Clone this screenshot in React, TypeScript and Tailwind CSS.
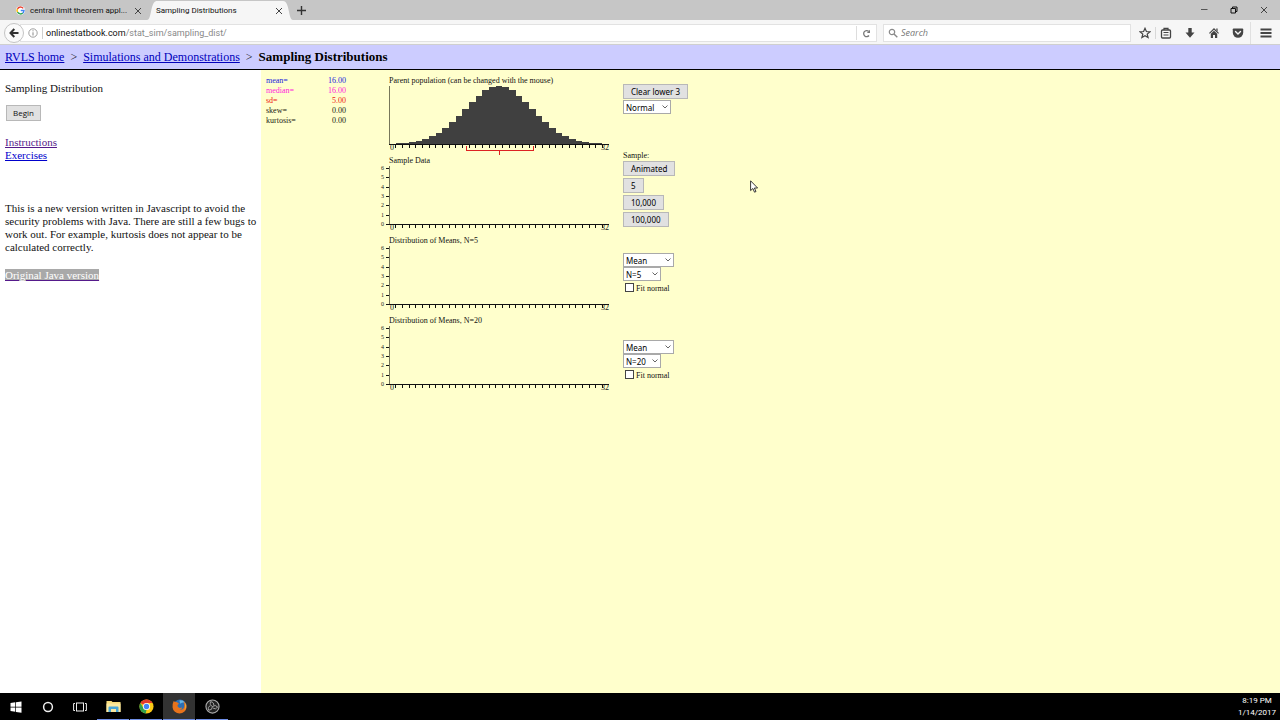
import { useState } from 'react';
import type { ReactNode } from 'react';

const UI_FONT = 'font-["Roboto",sans-serif]';
const SERIF = 'font-["Liberation_Serif",serif]';

const stats = [
  { label: 'mean=', value: '16.00', color: 'text-[#2222dd]' },
  { label: 'median=', value: '16.00', color: 'text-[#ff22dd]' },
  { label: 'sd=', value: '5.00', color: 'text-[#ee2211]' },
  { label: 'skew=', value: '0.00', color: 'text-[#222211]' },
  { label: 'kurtosis=', value: '0.00', color: 'text-[#222211]' },
];

const BINS = 33;
const BIN_WIDTH = 220 / BINS;
const AXIS_X = 11;
const AXIS_Y = 70;

// normal curve with mean 16 and sd 5
const normalBins = Array.from({ length: BINS }, (_, i) => Math.round(58 * Math.exp(-((i - 16) ** 2) / 50)));

function Chart({ title, bins, yAxis }: { title: string; bins?: number[]; yAxis?: boolean }) {
  return (
    <svg width="234" height="80" viewBox="0 0 234 80" className="block overflow-visible" role="img" aria-label={title}>
      <text x={AXIS_X} y="9" fontSize="8" fill="#111">{title}</text>
      {bins?.map((h, i) => (
        <rect
          key={i}
          x={AXIS_X + i * BIN_WIDTH}
          y={AXIS_Y - h}
          width={BIN_WIDTH}
          height={h}
          fill="#404040"
          shapeRendering="crispEdges"
        />
      ))}
      <g stroke="#111" strokeWidth="1" shapeRendering="crispEdges">
        <line x1={AXIS_X} x2={AXIS_X} y1="12" y2={AXIS_Y} stroke="#77775a" />
        <line x1={yAxis ? 8 : AXIS_X} x2="231" y1={AXIS_Y + 0.5} y2={AXIS_Y + 0.5} />
        {Array.from({ length: BINS - 1 }, (_, i) => (
          <line key={i} x1={AXIS_X + (i + 1) * BIN_WIDTH} x2={AXIS_X + (i + 1) * BIN_WIDTH} y1={AXIS_Y} y2={AXIS_Y + 4} />
        ))}
        {yAxis && [1, 2, 3, 4, 5, 6].map(n => (
          <line key={n} x1="8" x2="11" y1={AXIS_Y - n * 9.33 + 0.5} y2={AXIS_Y - n * 9.33 + 0.5} />
        ))}
      </g>
      {yAxis && [0, 1, 2, 3, 4, 5, 6].map(n => (
        <text key={n} x="6" y={AXIS_Y + 2 - n * 9.33} fontSize="6" textAnchor="end" fill="#222">{n}</text>
      ))}
      <text x="12" y="76" fontSize="8" fill="#222">0</text>
      <text x="231" y="76" fontSize="8" textAnchor="end" fill="#222">32</text>
      {bins && (
        <path d="M88.5 72V76.5H155.5V72M121.5 76.5V81" fill="none" stroke="#dd2222" strokeWidth="1" shapeRendering="crispEdges" />
      )}
    </svg>
  );
}

function SimButton({ children }: { children: ReactNode }) {
  return (
    <button className="h-[15px] border border-[#b8b8b8] bg-[#e1e1e1] px-[7px] font-['Noto_Sans',sans-serif] text-[8px] leading-[14px] text-black">
      {children}
    </button>
  );
}

function Select({ label, options, width }: { label: string; options: string[]; width: string }) {
  return (
    <div className={`relative h-[14px] ${width}`}>
      <select
        aria-label={label}
        className="block h-full w-full appearance-none border border-[#a9a9a9] bg-white px-[2px] pt-px font-['Noto_Sans',sans-serif] text-[8px] leading-3 text-black"
      >
        {options.map(o => <option key={o}>{o}</option>)}
      </select>
      <svg className="pointer-events-none absolute right-[3px] top-[5px]" width="6" height="4" viewBox="0 0 6 4">
        <path d="M0.5 0.5L3 3L5.5 0.5" fill="none" stroke="#555" strokeWidth="0.9" />
      </svg>
    </div>
  );
}

function DistributionControls({ size, className }: { size: string; className: string }) {
  const [fit, setFit] = useState(false);

  return (
    <div className={className}>
      <Select label="Statistic" options={['Mean', 'Median', 'sd', 'Variance', 'Range']} width="w-[51px]" />
      <Select
        label="Sample size"
        options={[size, ...['N=2', 'N=5', 'N=10', 'N=16', 'N=20', 'N=25'].filter(n => n !== size)]}
        width="w-[38px]"
      />
      <label className="ml-[2px] flex h-3 items-center gap-[2px] text-[8px] leading-3">
        <input
          type="checkbox"
          checked={fit}
          onChange={e => setFit(e.target.checked)}
          className="size-[9px] appearance-none border border-[#444] bg-white checked:bg-[#444]"
        />
        <span className="pt-1">Fit normal</span>
      </label>
    </div>
  );
}

function CloseIcon({ className }: { className?: string }) {
  return (
    <svg width="8" height="8" viewBox="0 0 8 8" className={className}>
      <path d="M1 1L7 7M7 1L1 7" stroke="#444" strokeWidth="1" fill="none" />
    </svg>
  );
}

function TabBar() {
  return (
    <div className="flex h-5 items-end bg-[#c6c6c6] text-[8px] leading-[18px] text-[#111]">
      <div className="flex h-[19px] w-[147px] items-center pl-4">
        <svg width="9" height="9" viewBox="0 0 18 18" className="mr-[5px] shrink-0 rounded-full bg-white">
          <path d="M14.5 4.8A7 7 0 0 0 3 5.6" fill="none" stroke="#ea4335" strokeWidth="3" />
          <path d="M3 5.6A7 7 0 0 0 3 12.4" fill="none" stroke="#fbbc05" strokeWidth="3" />
          <path d="M3 12.4A7 7 0 0 0 13.5 14.2" fill="none" stroke="#34a853" strokeWidth="3" />
          <path d="M13.5 14.2A7 7 0 0 0 16 9H9.5" fill="none" stroke="#4285f4" strokeWidth="3" />
        </svg>
        <span className="w-[104px] whitespace-nowrap">central limit theorem appl...</span>
        <button aria-label="Close tab"><CloseIcon /></button>
      </div>
      <div className="flex h-[19px] items-stretch">
        <svg width="10" height="19" viewBox="0 0 10 19">
          <path d="M0 19C5 19 3 0 10 0V19Z" fill="#f6f6f6" />
        </svg>
        <div className="-ml-px flex w-[127px] items-center justify-between bg-[#f6f6f6]">
          <span>Sampling Distributions</span>
          <button aria-label="Close tab"><CloseIcon /></button>
        </div>
        <svg width="10" height="19" viewBox="0 0 10 19">
          <path d="M10 19C5 19 7 0 0 0V19Z" fill="#f6f6f6" />
        </svg>
      </div>
      <button aria-label="New tab" className="ml-1 flex h-[19px] items-center">
        <svg width="9" height="9" viewBox="0 0 9 9"><path d="M4.5 0V9M0 4.5H9" stroke="#333" strokeWidth="1.4" /></svg>
      </button>
      <div className="ml-auto flex h-5 items-center gap-[22px] pr-3">
        <button aria-label="Minimize">
          <svg width="8" height="8" viewBox="0 0 8 8"><path d="M1 3.5H7.5" stroke="#555" /></svg>
        </button>
        <button aria-label="Restore">
          <svg width="8" height="8" viewBox="0 0 8 8" fill="none" stroke="#111">
            <path d="M1 2.5H5.5V7H1Z" />
            <path d="M2.5 2V1H7V5.5H6" />
          </svg>
        </button>
        <button aria-label="Close"><CloseIcon /></button>
      </div>
    </div>
  );
}

function Toolbar() {
  return (
    <div className="flex h-[25px] items-center border-b border-[#cfcfcf] bg-[#f6f6f6] pt-[2px] text-[9px]">
      <button aria-label="Back" className="z-10 ml-1 flex size-5 shrink-0 items-center justify-center rounded-full border border-[#c4c4c4] bg-[#fbfbfb]">
        <svg width="10" height="10" viewBox="0 0 10 10">
          <path d="M5.3 1L1.5 5L5.3 9M1.8 5H9.5" fill="none" stroke="#333" strokeWidth="2" />
        </svg>
      </button>
      <div className="-ml-1 flex h-[18px] flex-1 items-center border border-[#e2e2e2] bg-white pl-[7px]">
        <svg width="10" height="10" viewBox="0 0 10 10" className="mr-1 shrink-0">
          <circle cx="5" cy="5" r="4.2" fill="none" stroke="#888" strokeWidth="0.8" />
          <path d="M5 4.3V7.5M5 2.3V3.3" stroke="#888" />
        </svg>
        <div className="h-3 w-px bg-[#d0d0d0]" />
        <a href="#" className="flex-1 pl-[3px] pt-[2px] text-[#888]">
          <span className="text-[#111]">onlinestatbook.com</span>/stat_sim/sampling_dist/
        </a>
        <button aria-label="Reload" className="flex h-[14px] w-5 items-center justify-center border-l border-[#ddd]">
          <svg width="9" height="9" viewBox="0 0 9 9">
            <path d="M7 6.5A3 3 0 1 1 6.6 2.3" fill="none" stroke="#777" strokeWidth="1.3" />
            <path d="M8 0.8V4H4.8Z" fill="#777" />
          </svg>
        </button>
      </div>
      <div className="ml-[6px] flex h-[18px] w-[248px] items-center border border-[#e2e2e2] bg-white pl-1">
        <svg width="10" height="10" viewBox="0 0 10 10" className="mr-[3px] shrink-0">
          <circle cx="4" cy="4" r="2.7" fill="none" stroke="#888" strokeWidth="1.2" />
          <path d="M6 6L9.3 9.3" stroke="#888" strokeWidth="1.4" />
        </svg>
        <input
          aria-label="Search"
          placeholder="Search"
          className="w-full bg-transparent font-['Open_Sans',sans-serif] italic outline-none placeholder:text-[#777]"
        />
      </div>
      <div className="flex h-full items-center pl-2">
        <button aria-label="Bookmark" className="mr-1">
          <svg width="12" height="12" viewBox="0 0 12 12">
            <path d="M6 1.3L7.4 4.5L10.9 4.8L8.2 7.1L9.1 10.5L6 8.7L2.9 10.5L3.8 7.1L1.1 4.8L4.6 4.5Z" fill="none" stroke="#444" strokeWidth="1.2" />
          </svg>
        </button>
        <div className="h-3 w-px bg-[#d8d8d8]" />
        <button aria-label="Bookmarks list" className="ml-1 mr-3">
          <svg width="12" height="12" viewBox="0 0 12 12" fill="none" stroke="#444">
            <rect x="1.5" y="3" width="9" height="8" rx="1" strokeWidth="1.3" />
            <path d="M4 3V1.3H8V3" strokeWidth="1.2" />
            <path d="M3.5 5.5H8.5M3.5 8H8.5" strokeWidth="1.1" />
          </svg>
        </button>
        <button aria-label="Downloads" className="mr-3">
          <svg width="12" height="12" viewBox="0 0 12 12"><path d="M4.3 1H7.7V5.5H10.5L6 10.8L1.5 5.5H4.3Z" fill="#444" /></svg>
        </button>
        <button aria-label="Home" className="mr-3">
          <svg width="12" height="12" viewBox="0 0 12 12">
            <path d="M6 1L11 6L10.2 6.8L6 2.8L1.8 6.8L1 6Z" fill="#444" />
            <path d="M2.8 6.8L6 3.8L9.2 6.8V11H7V8H5V11H2.8Z" fill="#444" />
            <path d="M8.3 1.5H9.6V4.5L8.3 3.2Z" fill="#444" />
          </svg>
        </button>
        <button aria-label="Pocket" className="mr-[6px]">
          <svg width="12" height="12" viewBox="0 0 12 12">
            <path d="M1.6 1.5H10.4Q11.2 1.5 11.2 2.3V5.5A5.2 5.2 0 0 1 0.8 5.5V2.3Q0.8 1.5 1.6 1.5Z" fill="#444" />
            <path d="M3.5 4.5L6 7L8.5 4.5" fill="none" stroke="#f6f6f6" strokeWidth="1.4" strokeLinecap="round" />
          </svg>
        </button>
        <div className="h-full w-px bg-[#e0e0e0]" />
        <button aria-label="Menu" className="ml-[9px] mr-2">
          <svg width="12" height="10" viewBox="0 0 12 10">
            <path d="M0.5 1.5H11.5M0.5 5H11.5M0.5 8.5H11.5" stroke="#444" strokeWidth="1.8" />
          </svg>
        </button>
      </div>
    </div>
  );
}

function TaskButton({ label, open, active, children }: { label: string; open?: boolean; active?: boolean; children: ReactNode }) {
  return (
    <button
      aria-label={label}
      className={`flex h-full w-8 items-center justify-center ${active ? 'bg-[#333]' : ''} ${open ? 'border-b border-[#7090e8]' : ''}`}
    >
      {children}
    </button>
  );
}

function Taskbar() {
  return (
    <footer className="flex h-[27px] items-stretch bg-black text-white">
      <div className="flex">
        <TaskButton label="Start">
          <svg width="12" height="12" viewBox="0 0 12 12" fill="#fff">
            <path d="M0.5 2L5.3 1.3V5.7H0.5ZM6 1.2L11.5 0.4V5.7H6ZM0.5 6.4H5.3V10.8L0.5 10.1ZM6 6.4H11.5V11.7L6 10.9Z" />
          </svg>
        </TaskButton>
        <TaskButton label="Cortana">
          <svg width="12" height="12" viewBox="0 0 12 12"><circle cx="6" cy="6" r="4.4" fill="none" stroke="#eee" strokeWidth="1.5" /></svg>
        </TaskButton>
        <TaskButton label="Task view">
          <svg width="14" height="10" viewBox="0 0 14 10" fill="none" stroke="#eee">
            <rect x="3.5" y="1" width="7" height="8" />
            <path d="M2 1.5H0.6V8.5H2M12 1.5H13.4V8.5H12" />
          </svg>
        </TaskButton>
      </div>
      <div className="ml-px flex gap-px">
        <TaskButton label="File Explorer" open>
          <svg width="15" height="13" viewBox="0 0 15 13">
            <path d="M0.5 1H5.5L6.5 2H14.5V12H0.5Z" fill="#f7dc7c" />
            <path d="M0.5 3.5H14.5V12H0.5Z" fill="#fbe9a0" />
            <path d="M2.5 12V7.5Q2.5 6.5 3.5 6.5H11.5Q12.5 6.5 12.5 7.5V12H10V9H5V12Z" fill="#48a6d8" />
          </svg>
        </TaskButton>
        <TaskButton label="Chrome" open>
          <svg width="15" height="15" viewBox="0 0 16 16">
            <circle cx="8" cy="8" r="7.5" fill="#fbc916" />
            <path d="M8 8L1.5 4.25A7.5 7.5 0 0 1 14.5 4.25H8Z" fill="#e33b2e" />
            <path d="M1.5 4.25L4.8 9.9L8 11.5L7.2 15.46A7.5 7.5 0 0 1 1.5 4.25Z" fill="#30a04c" />
            <circle cx="8" cy="8" r="3.8" fill="#fff" />
            <circle cx="8" cy="8" r="2.9" fill="#4285f4" />
          </svg>
        </TaskButton>
        <TaskButton label="Firefox" open active>
          <svg width="15" height="15" viewBox="0 0 16 16">
            <circle cx="8.5" cy="7.5" r="7" fill="#2c6fb5" />
            <path d="M8 1.5Q12 1 14 4Q11 3 9 5Q8 3 8 1.5Z" fill="#67b7e6" />
            <path d="M1.8 2.2Q3 3.5 5 3.2L7.5 5Q5.2 6 6 8Q7.5 10.5 11 8.8Q10.5 11.2 8 11.5Q13.5 12 13.2 6.5Q13 4 12 2.5Q16 5 15.5 9A7.5 7.3 0 0 1 0.6 9Q0.3 5 1.8 2.2Z" fill="#e8731c" />
            <path d="M13.8 4Q16 8.5 13.2 12Q14.7 8 13.8 4Z" fill="#fbc93d" />
          </svg>
        </TaskButton>
        <TaskButton label="OBS" open>
          <svg width="15" height="15" viewBox="0 0 16 16" fill="none" stroke="#aaa">
            <circle cx="8" cy="8" r="7" fill="#222" strokeWidth="1.2" />
            <path d="M8 8Q4.5 6.5 6 2.8M8 8Q11 5.5 13.5 8.6M8 8Q7.8 12 4 12M6 2.8Q9.8 3.5 9.3 6.8M13.5 8.6Q11.2 11.8 8.6 9.7M4 12Q2.5 8.3 5.8 7.2" strokeWidth="1" />
          </svg>
        </TaskButton>
      </div>
      <div className="ml-auto flex flex-col items-center justify-center pr-1 text-[8px] leading-3">
        <span>8:19 PM</span>
        <span>1/14/2017</span>
      </div>
    </footer>
  );
}

function Sidebar() {
  return (
    <aside className="w-[261px] shrink-0 bg-white pl-[5px] pt-3 text-[11px] leading-[13px] text-[#111]">
      <p>Sampling Distribution</p>
      <button className="ml-px mt-[10px] block h-4 border border-[#b8b8b8] bg-[#e1e1e1] px-[6px] font-['Open_Sans',sans-serif] text-[8px] leading-[14px]">
        Begin
      </button>
      <nav className="mt-[15px] flex flex-col items-start">
        <a href="#" className="text-[#551a8b] underline">Instructions</a>
        <a href="#" className="text-[#0000cc] underline">Exercises</a>
      </nav>
      <p className="mt-10">
        This is a new version written in Javascript to avoid the security problems with Java. There are still a few
        bugs to work out. For example, kurtosis does not appear to be calculated correctly.
      </p>
      <p className="mt-[15px]">
        <a href="#" className="bg-[#a9a9a9] text-white underline decoration-[#551a8b]">Original Java version</a>
      </p>
    </aside>
  );
}

export default function App() {
  return (
    <div className={`flex min-h-screen flex-col ${UI_FONT}`}>
      <TabBar />
      <Toolbar />
      <header className={`flex h-[25px] items-center gap-[6px] border-b border-black bg-[#ccccff] pl-[5px] text-[12px] text-[#111] ${SERIF}`}>
        <a href="#" className="text-[#0000bb] underline">RVLS home</a>
        <span>&gt;</span>
        <a href="#" className="text-[#0000bb] underline">Simulations and Demonstrations</a>
        <span>&gt;</span>
        <h1 className="text-[13px] font-bold text-black">Sampling Distributions</h1>
      </header>
      <div className={`flex flex-1 ${SERIF}`}>
        <Sidebar />
        <main className="relative flex flex-1 items-start bg-[#ffffcc] text-[#111]">
          <table className="ml-[5px] mt-[6px] w-20 text-[8px] leading-[10px]">
            <tbody>
              {stats.map(s => (
                <tr key={s.label} className={s.color}>
                  <th scope="row" className="p-0 text-left font-normal">{s.label}</th>
                  <td className="p-0 text-right">{s.value}</td>
                </tr>
              ))}
            </tbody>
          </table>
          <div className="ml-8 mt-1">
            <Chart title="Parent population (can be changed with the mouse)" bins={normalBins} />
            <Chart title="Sample Data" yAxis />
            <Chart title="Distribution of Means, N=5" yAxis />
            <Chart title="Distribution of Means, N=20" yAxis />
          </div>
          <div className="ml-[11px] mt-[14px] flex flex-col items-start">
            <SimButton>Clear lower 3</SimButton>
            <div className="mt-px">
              <Select label="Parent distribution" options={['Normal', 'Uniform', 'Skewed', 'Custom']} width="w-[48px]" />
            </div>
            <h2 className="mt-[37px] text-[8px] leading-[10px]">Sample:</h2>
            <div className="flex flex-col items-start gap-[2px]">
              <SimButton>Animated</SimButton>
              <SimButton>5</SimButton>
              <SimButton>10,000</SimButton>
              <SimButton>100,000</SimButton>
            </div>
            <DistributionControls size="N=5" className="mt-[26px]" />
            <DistributionControls size="N=20" className="mt-[47px]" />
          </div>
          <svg className="pointer-events-none absolute left-[489px] top-[110px]" width="9" height="13" viewBox="0 0 9 13">
            <path d="M0.6 0.8V10.6L2.9 8.5L4.5 12.2L6 11.5L4.4 8H7.6Z" fill="#fff" stroke="#222" strokeWidth="0.9" />
          </svg>
        </main>
      </div>
      <Taskbar />
    </div>
  );
}
